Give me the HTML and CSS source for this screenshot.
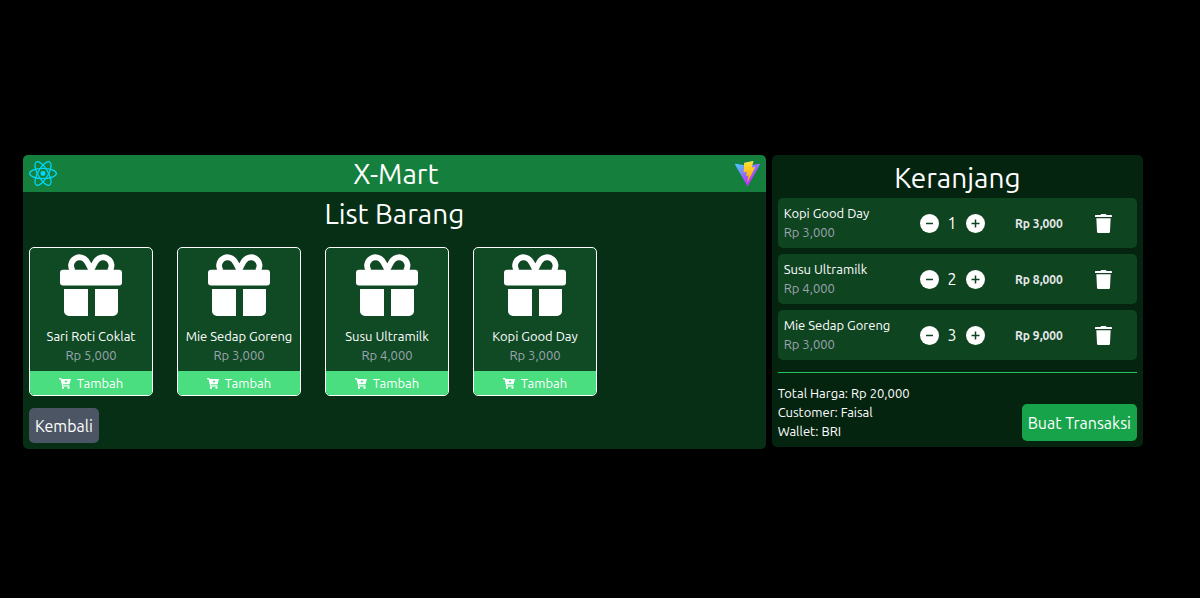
FILE: index.html
```html
<!DOCTYPE html>
<html lang="id">

<head>
    <meta charset="UTF-8">
    <meta name="viewport" content="width=device-width, initial-scale=1.0">
    <title>X-Mart</title>
    <link rel="stylesheet" href="styles.css">
</head>

<body>
    <!-- shared icons -->
    <svg class="sprite" aria-hidden="true">
        <symbol id="gift" viewBox="0 0 62 62">
            <path d="M13 17A8.400 8.400 0 1 1 26 6.300Q28 9 31.300 16Q34.600 9 36.600 6.300A8.400 8.400 0 1 1 49.600 17" fill="none" stroke="currentColor" stroke-width="5.800" />
            <rect y="15.700" width="62" height="15.800" rx="3" fill="currentColor" />
            <path d="M4 35h24v27H9a5 5 0 0 1-5-5zM35 35h23v22a5 5 0 0 1-5 5H35z" fill="currentColor" />
        </symbol>
        <symbol id="cart" viewBox="0 0 24 22">
            <path d="M0 0h4.500l.6 2H24l-3 10.500H8l.5 2H21V17H6.500L3 2.500H0z" fill="currentColor" />
            <path d="M14 4.500v5M11.500 7h5" stroke="#4ade80" stroke-width="1.800" />
            <circle cx="8" cy="19.500" r="2.300" fill="currentColor" />
            <circle cx="19" cy="19.500" r="2.300" fill="currentColor" />
        </symbol>
        <symbol id="minus" viewBox="0 0 19 19">
            <circle cx="9.500" cy="9.500" r="9.500" fill="currentColor" />
            <path d="M6 9.500h7" stroke="#0f4421" stroke-width="1.500" />
        </symbol>
        <symbol id="plus" viewBox="0 0 19 19">
            <circle cx="9.500" cy="9.500" r="9.500" fill="currentColor" />
            <path d="M5.500 9.500h8M9.500 5.500v8" stroke="#0f4421" stroke-width="1.500" />
        </symbol>
        <symbol id="trash" viewBox="0 0 51 57">
            <path d="M2 3h14l3-3h13l3 3h14q2 0 2 2v4H0V5q0-2 2-2zM4 13h43l-2 40q0 4-4 4H10q-4 0-4-4z" fill="currentColor" />
        </symbol>
    </svg>

    <div class="container">
        <main class="shop">
            <header>
                <svg class="react" viewBox="-11.500 -10.232 23 20.463" fill="none" stroke="#00d8ff">
                    <circle r="2.050" fill="#00d8ff" stroke="none" />
                    <ellipse rx="11" ry="4.200" />
                    <ellipse rx="11" ry="4.200" transform="rotate(60)" />
                    <ellipse rx="11" ry="4.200" transform="rotate(120)" />
                </svg>
                <h1>X-Mart</h1>
                <svg class="vite" viewBox="0 0 256 257">
                    <defs>
                        <linearGradient id="vite-bg" x1="0" x2=".58" y1="0" y2=".79">
                            <stop offset="0" stop-color="#41d1ff" />
                            <stop offset="1" stop-color="#bd34fe" />
                        </linearGradient>
                        <linearGradient id="vite-bolt" x1=".43" x2=".5" y1=".02" y2=".89">
                            <stop offset="0" stop-color="#ffea83" />
                            <stop offset=".083" stop-color="#ffdd35" />
                            <stop offset="1" stop-color="#ffa800" />
                        </linearGradient>
                    </defs>
                    <path fill="url(#vite-bg)" d="M255.153 37.938 134.897 252.976c-2.483 4.440-8.862 4.466-11.382.048L.875 37.958c-2.746-4.814 1.371-10.646 6.827-9.670l120.385 21.517a6.537 6.537 0 0 0 2.322-.004l117.867-21.483c5.438-.991 9.574 4.796 6.877 9.620Z" />
                    <path fill="url(#vite-bolt)" d="M185.432.063 96.440 17.501a3.268 3.268 0 0 0-2.634 3.014l-5.474 92.456a3.268 3.268 0 0 0 3.997 3.378l24.777-5.718c2.318-.535 4.413 1.507 3.936 3.838l-7.361 36.047c-.495 2.426 1.782 4.500 4.151 3.780l15.304-4.649c2.372-.720 4.652 1.360 4.150 3.788l-11.698 56.621c-.732 3.542 3.979 5.473 5.943 2.437l1.313-2.028 72.516-144.720c1.215-2.423-.880-5.186-3.540-4.672l-25.505 4.922c-2.396.462-4.435-1.770-3.759-4.114l16.646-57.705c.677-2.350-1.370-4.583-3.769-4.113Z" />
                </svg>
            </header>
            <div class="content">
                <h2>List Barang</h2>
                <div class="items">
                    <div class="item">
                        <svg class="gift"><use href="#gift" /></svg>
                        <p>Sari Roti Coklat</p>
                        <p class="price">Rp 5,000</p>
                        <button><svg><use href="#cart" /></svg>Tambah</button>
                    </div>
                    <div class="item">
                        <svg class="gift"><use href="#gift" /></svg>
                        <p>Mie Sedap Goreng</p>
                        <p class="price">Rp 3,000</p>
                        <button><svg><use href="#cart" /></svg>Tambah</button>
                    </div>
                    <div class="item">
                        <svg class="gift"><use href="#gift" /></svg>
                        <p>Susu Ultramilk</p>
                        <p class="price">Rp 4,000</p>
                        <button><svg><use href="#cart" /></svg>Tambah</button>
                    </div>
                    <div class="item">
                        <svg class="gift"><use href="#gift" /></svg>
                        <p>Kopi Good Day</p>
                        <p class="price">Rp 3,000</p>
                        <button><svg><use href="#cart" /></svg>Tambah</button>
                    </div>
                </div>
                <button class="back">Kembali</button>
            </div>
        </main>

        <aside class="cart">
            <h2>Keranjang</h2>
            <div class="rows">
                <div class="row">
                    <div>
                        <p>Kopi Good Day</p>
                        <p class="price">Rp 3,000</p>
                    </div>
                    <div class="qty">
                        <button aria-label="Kurangi"><svg><use href="#minus" /></svg></button>
                        <span>1</span>
                        <button aria-label="Tambah"><svg><use href="#plus" /></svg></button>
                    </div>
                    <p class="subtotal">Rp 3,000</p>
                    <button class="delete" aria-label="Hapus"><svg><use href="#trash" /></svg></button>
                </div>
                <div class="row">
                    <div>
                        <p>Susu Ultramilk</p>
                        <p class="price">Rp 4,000</p>
                    </div>
                    <div class="qty">
                        <button aria-label="Kurangi"><svg><use href="#minus" /></svg></button>
                        <span>2</span>
                        <button aria-label="Tambah"><svg><use href="#plus" /></svg></button>
                    </div>
                    <p class="subtotal">Rp 8,000</p>
                    <button class="delete" aria-label="Hapus"><svg><use href="#trash" /></svg></button>
                </div>
                <div class="row">
                    <div>
                        <p>Mie Sedap Goreng</p>
                        <p class="price">Rp 3,000</p>
                    </div>
                    <div class="qty">
                        <button aria-label="Kurangi"><svg><use href="#minus" /></svg></button>
                        <span>3</span>
                        <button aria-label="Tambah"><svg><use href="#plus" /></svg></button>
                    </div>
                    <p class="subtotal">Rp 9,000</p>
                    <button class="delete" aria-label="Hapus"><svg><use href="#trash" /></svg></button>
                </div>
            </div>
            <hr>
            <div class="summary">
                <div>
                    <p>Total Harga: Rp 20,000</p>
                    <p>Customer: Faisal</p>
                    <p>Wallet: BRI</p>
                </div>
                <button class="checkout">Buat Transaksi</button>
            </div>
        </aside>
    </div>
</body>

</html>
```
FILE: styles.css
```css
* {
    margin: 0;
    padding: 0;
    box-sizing: border-box;
}

body {
    background-color: #000;
    color: #fff;
    font-family: Ubuntu, "Noto Sans", sans-serif;
    font-size: 13px;
    line-height: 19px;
    min-height: 100vh;
    display: flex;
    align-items: center;
    padding: 6px 57px 0 23px;
}

button {
    border: none;
    background: none;
    color: #fff;
    font-family: inherit;
    cursor: pointer;
}

svg {
    display: block;
}

.sprite {
    display: none;
}

h1,
h2 {
    font-size: 28px;
    font-weight: 400;
    text-align: center;
}

.container {
    flex: 1;
    display: grid;
    grid-template-columns: 2fr 1fr;
    gap: 6px;
    align-items: start;
}

.shop {
    background-color: #062f15;
    border-radius: 5px;
    overflow: hidden;
}

.shop header {
    background-color: #15803d;
    display: flex;
    justify-content: space-between;
    align-items: center;
    padding: 0 6px;
}

h1 {
    line-height: 37px;
}

.react {
    width: 28px;
    height: 25px;
}

.vite {
    width: 25px;
    height: 25px;
}

.content {
    padding: 0 6px 6px;
}

.content h2 {
    line-height: 43px;
    margin-bottom: 12px;
}

.items {
    display: grid;
    grid-template-columns: repeat(auto-fill, 124px);
    gap: 24px;
    margin-bottom: 12px;
}

.item {
    background-color: #0f4a24;
    border: 1px solid #fff;
    border-radius: 5px;
    overflow: hidden;
    text-align: center;
}

.gift {
    width: 62px;
    height: 62px;
    margin: 6px auto 11px;
}

.price {
    color: #9ca3af;
}

.item button {
    width: 100%;
    height: 24px;
    margin-top: 6px;
    background-color: #4ade80;
    font-size: 13px;
    display: flex;
    justify-content: center;
    align-items: center;
    gap: 6px;
}

.item button svg {
    width: 12px;
    height: 11px;
}

.back,
.checkout {
    border-radius: 5px;
    padding: 0 6px;
    font-size: 16px;
}

.back {
    display: block;
    background-color: #4b5563;
    height: 35px;
}

.cart {
    background-color: #052410;
    border-radius: 5px;
    padding: 6px;
}

.cart h2 {
    line-height: 33px;
    margin-bottom: 4px;
}

.rows {
    display: grid;
    gap: 6px;
}

.row {
    background-color: #0f4421;
    border-radius: 5px;
    padding: 6px;
    display: grid;
    grid-template-columns: 36% 25% 25% 12%;
    align-items: center;
}

.qty {
    display: flex;
    justify-content: center;
    align-items: center;
    gap: 9px;
    font-size: 16px;
}

.qty svg {
    width: 19px;
    height: 19px;
}

.subtotal {
    color: #e5e7eb;
    font-weight: 600;
    font-size: 12px;
    text-align: center;
}

.delete {
    justify-self: center;
}

.delete svg {
    width: 17px;
    height: 19px;
}

hr {
    border: none;
    border-top: 1px solid #22c55e;
    margin: 12px 0 11px;
}

.summary {
    display: flex;
    justify-content: space-between;
    align-items: flex-end;
}

.checkout {
    background-color: #16a34a;
    height: 37px;
}
```
